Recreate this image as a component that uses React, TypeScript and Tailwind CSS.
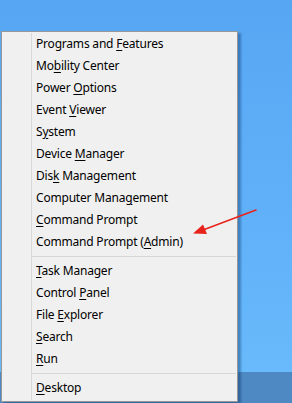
import React from "react";

type Item = { pre: string; key: string; post: string };

const groupA: Item[] = [
  { pre: "Programs and ", key: "F", post: "eatures" },
  { pre: "Mo", key: "b", post: "ility Center" },
  { pre: "Power ", key: "O", post: "ptions" },
  { pre: "Event ", key: "V", post: "iewer" },
  { pre: "S", key: "y", post: "stem" },
  { pre: "Device ", key: "M", post: "anager" },
  { pre: "Dis", key: "k", post: " Management" },
  { pre: "Computer Mana", key: "g", post: "ement" },
  { pre: "", key: "C", post: "ommand Prompt" },
  { pre: "Command Prompt (", key: "A", post: "dmin)" },
];

const groupB: Item[] = [
  { pre: "", key: "T", post: "ask Manager" },
  { pre: "Control ", key: "P", post: "anel" },
  { pre: "File ", key: "E", post: "xplorer" },
  { pre: "", key: "S", post: "earch" },
  { pre: "", key: "R", post: "un" },
];

const groupC: Item[] = [{ pre: "", key: "D", post: "esktop" }];

function Row({ item }: { item: Item }) {
  return (
    <div className="h-[22px] flex items-center pl-[4px] text-[12px] leading-[22px] tracking-[-0.2px] text-black whitespace-nowrap">
      <span>
        {item.pre}
        <span className="underline underline-offset-[2px] decoration-[1px]">{item.key}</span>
        {item.post}
      </span>
    </div>
  );
}

function Sep() {
  return (
    <div className="h-[7px] flex flex-col justify-start pt-[3px]">
      <div className="h-px bg-[#d7d7d7]" />
    </div>
  );
}

export default function App() {
  return (
    <div
      className="relative w-[292px] h-[403px] overflow-hidden flex flex-col"
      style={{ fontFamily: '"Noto Sans", "Open Sans", sans-serif' }}
    >
      <div className="flex-1 bg-[linear-gradient(180deg,#57a6f3_0%,#60b1f9_60%,#68bafb_100%)]" />
      <div className="h-[31px] bg-[#4e89c3]" />

      <div className="absolute left-[1px] top-[31px] w-[237px] h-[371px] bg-[#f0f0f0] border border-[#979797] shadow-[3px_2px_2px_rgba(0,40,90,0.35)] flex">
        <div className="w-[29px] shrink-0" />
        <div className="w-px bg-[#d9d9d9] my-[1px]" />
        <div className="flex-1 flex flex-col pt-[1px] mr-[1px]">
          {groupA.map((it, i) => (
            <Row key={i} item={it} />
          ))}
          <Sep />
          {groupB.map((it, i) => (
            <Row key={i} item={it} />
          ))}
          <Sep />
          {groupC.map((it, i) => (
            <Row key={i} item={it} />
          ))}
        </div>
      </div>

      <svg className="absolute left-0 top-0" width="292" height="403" viewBox="0 0 292 403">
        <line x1="256" y1="210" x2="203" y2="230" stroke="#e8231c" strokeWidth="1.6" strokeLinecap="round" />
        <polygon points="193,233.5 203,224.5 207,234" fill="#e8231c" />
      </svg>
    </div>
  );
}
